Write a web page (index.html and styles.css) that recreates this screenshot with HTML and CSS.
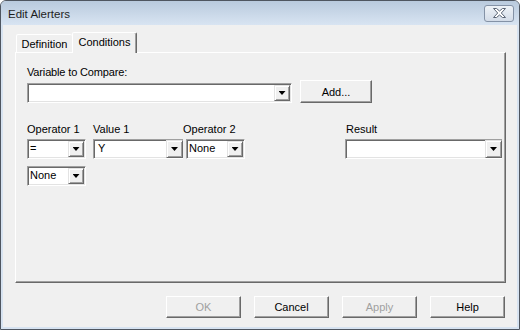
FILE: index.html
```html
<!DOCTYPE html>
<html>
<head>
<meta charset="utf-8">
<title>Edit Alerters</title>
<link rel="stylesheet" href="styles.css">
</head>
<body>
<div class="window">
  <div class="titlebar">
    <span class="title">Edit Alerters</span>
    <div class="close">
      <svg width="13" height="10" viewBox="0 0 13 10"><polygon points="0.5,0.5 3.5,0.5 6.5,3 9.5,0.5 12.5,0.5 8.3,5 12.5,9.5 9.5,9.5 6.5,7 3.5,9.5 0.5,9.5 4.7,5" fill="#ffffff" stroke="#5a6475" stroke-width="1" stroke-linejoin="round"/></svg>
    </div>
  </div>
  <div class="client">
    <div class="tabs">
      <div class="tab def">Definition</div>
      <div class="tab active">Conditions</div>
    </div>
    <div class="panel">
      <div class="label tight">Variable to Compare:</div>
      <div class="var-row">
        <div class="combo var"><span class="value"></span><span class="drop"></span></div>
        <div class="btn add">Add...</div>
      </div>
      <div class="ops">
        <div class="col op1">
          <div class="label">Operator 1</div>
          <div class="combo"><span class="value">=</span><span class="drop"></span></div>
          <div class="combo second"><span class="value">None</span><span class="drop"></span></div>
        </div>
        <div class="col val1">
          <div class="label">Value 1</div>
          <div class="combo flush"><span class="value wide-pad">Y</span><span class="drop"></span></div>
        </div>
        <div class="col op2">
          <div class="label">Operator 2</div>
          <div class="combo"><span class="value">None</span><span class="drop"></span></div>
        </div>
        <div class="col result">
          <div class="label">Result</div>
          <div class="combo flush"><span class="value"></span><span class="drop"></span></div>
        </div>
      </div>
    </div>
    <div class="buttons">
      <div class="btn dlg disabled">OK</div>
      <div class="btn dlg">Cancel</div>
      <div class="btn dlg disabled">Apply</div>
      <div class="btn dlg">Help</div>
    </div>
  </div>
</div>
</body>
</html>
```
FILE: styles.css
```css
html, body {
  margin: 0;
  padding: 0;
  background: #ffffff;
}
body {
  font-family: "Liberation Sans", Arial, sans-serif;
  font-size: 11px;
  color: #000;
}
.window {
  width: 520px;
  height: 330px;
  box-sizing: border-box;
  border: 1px solid #4f5660;
  border-radius: 6px 6px 0 0;
  background: #d7e3f1;
  display: flex;
  flex-direction: column;
  overflow: hidden;
}
.titlebar {
  flex: none;
  height: 24px;
  background: linear-gradient(#b9cadd, #d8e4f2);
  display: flex;
  align-items: center;
  justify-content: space-between;
  padding: 0 5px 0 7px;
}
.title {
  font-size: 11.5px;
  line-height: 14px;
  padding-top: 1px;
  color: #1e1e1e;
}
.close {
  width: 30px;
  height: 17px;
  box-sizing: border-box;
  border: 1px solid #8492a6;
  border-radius: 3px;
  background: linear-gradient(#eef2f7, #d3dce8);
  display: flex;
  align-items: center;
  justify-content: center;
}
.close svg { display: block; }
.client {
  flex: 1;
  margin: 0 2px 2px 2px;
  background: #f0f0f0;
  padding: 7px 11px 0 12px;
  box-sizing: border-box;
}
.tabs {
  display: flex;
  align-items: flex-end;
  height: 20px;
  padding-left: 1px;
}
.tab {
  box-sizing: border-box;
  height: 18px;
  padding-top: 3px;
  line-height: 13px;
  text-align: center;
  white-space: nowrap;
  border: 1px solid;
  border-bottom: none;
  border-color: #ffffff #696969 transparent #ffffff;
  border-radius: 2px 2px 0 0;
  box-shadow: inset -1px 0 0 #a0a0a0;
  background: #f0f0f0;
}
.tab.def {
  width: 56px;
  border-right: none;
  box-shadow: none;
}
.tab.active {
  width: 65px;
  height: 21px;
  margin-bottom: -1px;
  position: relative;
  z-index: 1;
}
.panel {
  height: 231px;
  box-sizing: border-box;
  border: 1px solid;
  border-color: #ffffff #696969 #696969 #ffffff;
  box-shadow: inset -1px -1px 0 #a0a0a0;
  background: #f0f0f0;
  padding: 13px 0 0 11px;
}
.label {
  line-height: 13px;
  white-space: nowrap;
}
.label.tight { letter-spacing: -0.15px; }
.var-row {
  display: flex;
  align-items: flex-end;
  gap: 8px;
  margin-top: 1px;
}
.combo {
  display: flex;
  height: 20px;
  box-sizing: border-box;
  border: 1px solid;
  border-color: #a0a0a0 #ffffff #ffffff #a0a0a0;
  background: #ffffff;
  box-shadow: inset 1px 1px 0 #696969, inset -1px -1px 0 #e3e3e3;
}
.combo .value {
  flex: 1;
  padding: 1px 0 0 2px;
  line-height: 15px;
  white-space: nowrap;
  overflow: hidden;
}
.combo .value.wide-pad { padding-left: 4px; }
.drop {
  flex: none;
  width: 16px;
  height: 16px;
  margin: 1px 1px 1px 0;
  box-sizing: border-box;
  background: #f0f0f0;
  border: 1px solid;
  border-color: #e3e3e3 #696969 #696969 #e3e3e3;
  box-shadow: inset 1px 1px 0 #ffffff, inset -1px -1px 0 #a0a0a0;
  display: flex;
  align-items: center;
  justify-content: center;
}
.drop::after {
  content: "";
  width: 7px;
  height: 4px;
  background: #000;
  clip-path: polygon(0 0, 100% 0, 50% 100%);
}
.combo.flush {
  border-right: none;
}
.combo.flush .drop {
  width: 17px;
  height: 18px;
  margin: 0;
}
.combo.var { width: 265px; }
.btn {
  box-sizing: border-box;
  height: 23px;
  border: 1px solid;
  border-color: #ffffff #696969 #696969 #ffffff;
  box-shadow: inset -1px -1px 0 #a0a0a0;
  background: #f0f0f0;
  display: flex;
  align-items: center;
  justify-content: center;
  white-space: nowrap;
}
.btn.add { width: 72px; }
.ops {
  display: flex;
  margin-top: 20px;
}
.col .combo { margin-top: 3px; }
.col .combo.second { margin-top: 7px; }
.op1 { width: 59px; }
.val1 { width: 90px; margin-left: 7px; }
.op2 { width: 59px; margin-left: 3px; }
.op2 .label { margin-left: -3px; }
.result { width: 157px; margin-left: 100px; }
.result .label { padding-left: 1px; }
.buttons {
  display: flex;
  justify-content: flex-end;
  gap: 13px;
  margin-top: 13px;
  padding-right: 1px;
}
.btn.dlg {
  width: 75px;
  height: 22px;
  padding-bottom: 1px;
}
.btn.disabled { color: #a0a0a0; }
```
